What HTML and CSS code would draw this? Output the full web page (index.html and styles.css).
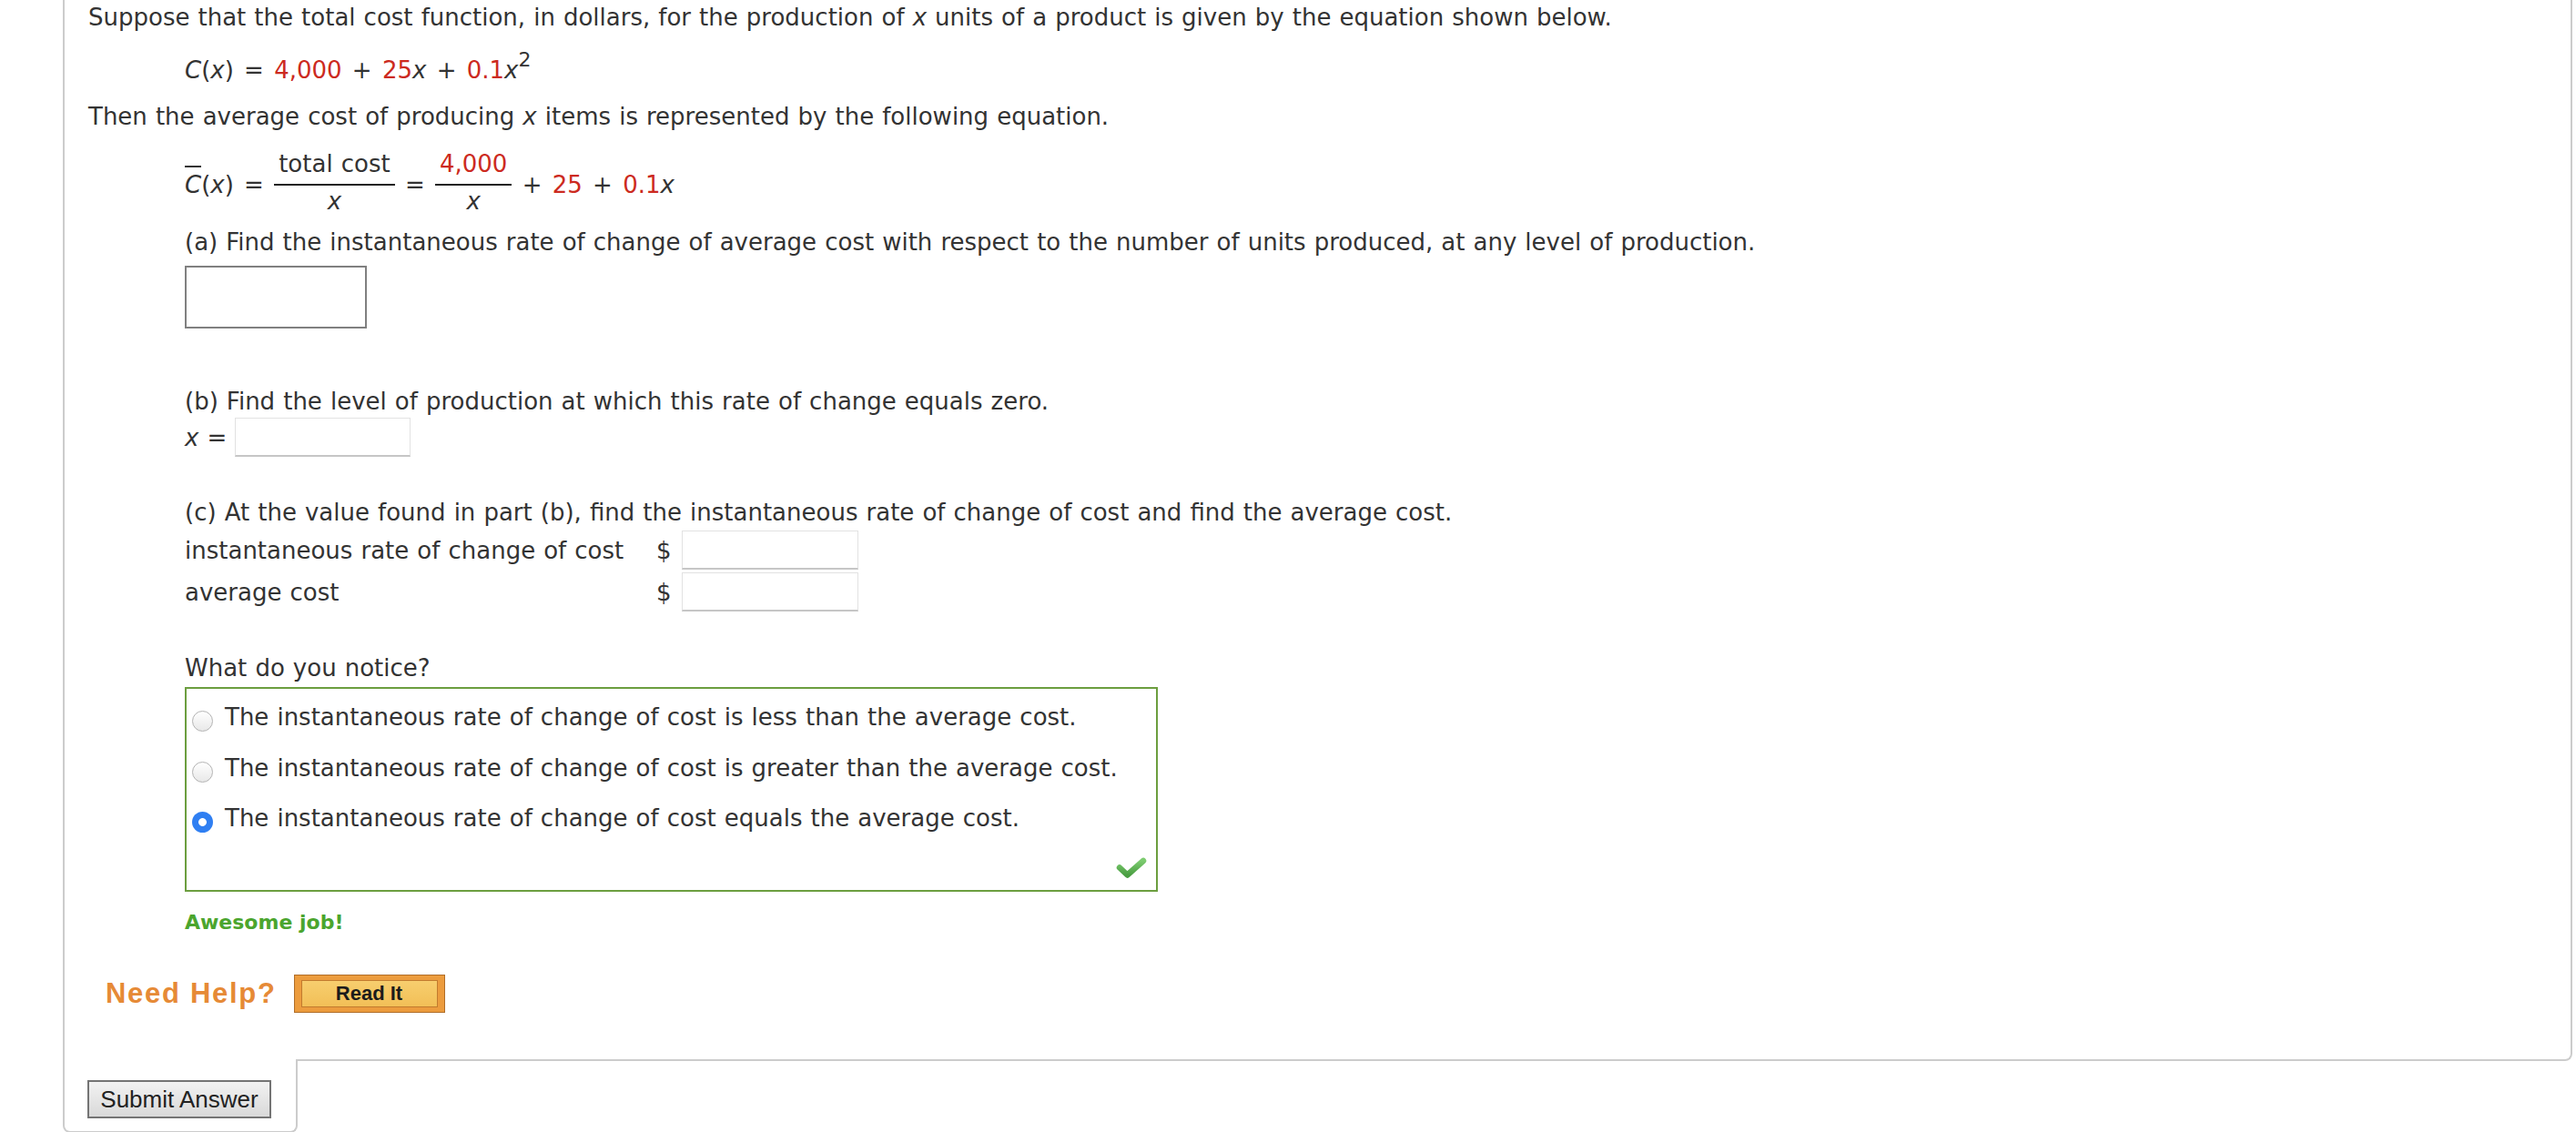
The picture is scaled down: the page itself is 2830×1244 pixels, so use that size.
FILE: index.html
```html
<!DOCTYPE html>
<html>
<head>
<meta charset="utf-8">
<link rel="stylesheet" href="styles.css">
</head>
<body>
<div class="card">
  <div class="qbody">
    <p class="txt first">Suppose that the total cost function, in dollars, for the production of <i>x</i> units of a product is given by the equation shown below.</p>
    <p class="math eq1"><i>C</i>(<i>x</i>) = <span class="red">4,000</span> + <span class="red">25</span><i>x</i> + <span class="red">0.1</span><i>x</i><sup>2</sup></p>
    <p class="txt p2">Then the average cost of producing <i>x</i> items is represented by the following equation.</p>
    <p class="math eq2"><span class="cbar"><i>C</i></span>(<i>x</i>) = <span class="frac"><span class="num">total cost</span><span class="bar"></span><span class="den"><i>x</i></span></span> = <span class="frac"><span class="num red">4,000</span><span class="bar"></span><span class="den"><i>x</i></span></span> + <span class="red">25</span> + <span class="red">0.1</span><i>x</i></p>
    <div class="part">
      <p class="txt pa">(a) Find the instantaneous rate of change of average cost with respect to the number of units produced, at any level of production.</p>
      <div class="mathbox"></div>
      <p class="txt pb">(b) Find the level of production at which this rate of change equals zero.</p>
      <div class="xrow"><span class="txt"><i>x</i> =</span><input class="ans ansx" type="text"></div>
      <p class="txt pc">(c) At the value found in part (b), find the instantaneous rate of change of cost and find the average cost.</p>
      <div class="grid">
        <span class="txt">instantaneous rate of change of cost</span><span class="txt dol">$</span><input class="ans" type="text">
        <span class="txt">average cost</span><span class="txt dol">$</span><input class="ans" type="text">
      </div>
      <p class="txt pn">What do you notice?</p>
      <div class="choices">
        <div class="opt"><span class="radio"></span><span class="txt">The instantaneous rate of change of cost is less than the average cost.</span></div>
        <div class="opt"><span class="radio"></span><span class="txt">The instantaneous rate of change of cost is greater than the average cost.</span></div>
        <div class="opt last"><span class="radio on"></span><span class="txt">The instantaneous rate of change of cost equals the average cost.</span></div>
        <div class="checkrow">
          <svg width="34" height="24" viewBox="0 0 34 24">
            <defs>
              <linearGradient id="cg" x1="0" y1="0" x2="0" y2="1">
                <stop offset="0" stop-color="#7ccb6f"/>
                <stop offset="1" stop-color="#4a9e42"/>
              </linearGradient>
            </defs>
            <path d="M4 11.5 L12.5 19.5 L30 4" fill="none" stroke="url(#cg)" stroke-width="6.5" stroke-linecap="round" stroke-linejoin="round"/>
          </svg>
        </div>
      </div>
      <p class="awesome">Awesome job!</p>
    </div>
    <div class="help">
      <span class="needhelp">Need Help?</span>
      <button class="readit" type="button"><span class="readin">Read It</span></button>
    </div>
  </div>
  <div class="tab"><button class="submit" type="button">Submit Answer</button></div>
</div>
</body>
</html>
```
FILE: styles.css
```css
html, body {
  margin: 0;
  padding: 0;
  background: #ffffff;
}
body {
  font-family: "DejaVu Sans", Verdana, sans-serif;
  font-size: 26px;
  color: #333333;
}
p { margin: 0; }
.card {
  margin-left: 69px;
  width: 2757px;
  box-sizing: border-box;
}
.qbody {
  border-left: 2px solid #cccccc;
  border-right: 2px solid #cccccc;
  border-bottom: 2px solid #cccccc;
  border-bottom-right-radius: 8px;
  padding: 3px 0 51px 26px;
}
.txt {
  line-height: 32px;
  word-spacing: 0.8px;
}
.math {
  line-height: 32px;
  word-spacing: 3px;
  margin-left: 106px;
}
.red { color: #cc2a20; }
sup {
  font-size: 22px;
  line-height: 0;
  vertical-align: 13px;
}
.eq1 { margin-top: 26px; }
.p2 { margin-top: 19px; }
.eq2 { margin-top: 20px; }
.cbar {
  display: inline-block;
  border-top: 2px solid #333333;
  padding-top: 6px;
  line-height: 26px;
}
.frac {
  display: inline-block;
  vertical-align: -18px;
  text-align: center;
  word-spacing: 0.8px;
}
.num {
  display: block;
  line-height: 32px;
  padding: 0 5px 6px 5px;
}
.bar {
  display: block;
  height: 2px;
  background: #222222;
}
.den {
  display: block;
  line-height: 32px;
  padding: 1px 5px 0 5px;
}
.part { margin-left: 106px; }
.pa { margin-top: 13px; }
.mathbox {
  margin-top: 10px;
  width: 200px;
  height: 69px;
  box-sizing: border-box;
  border: 2px solid #808080;
}
.pb { margin-top: 64px; }
.xrow {
  margin-top: 2px;
  height: 43px;
  display: flex;
  align-items: center;
}
.ans {
  box-sizing: border-box;
  height: 43px;
  width: 194px;
  margin: 0;
  padding: 0;
  border: 1px solid #e2e2e2;
  border-bottom: 2px solid #c6c6c6;
  background: #ffffff;
  font: inherit;
}
.ansx {
  margin-left: 9px;
  width: 193px;
}
.pc { margin-top: 45px; }
.grid {
  margin-top: 4px;
  display: grid;
  grid-template-columns: 518px 28px 194px;
  grid-auto-rows: 43px;
  row-gap: 3px;
  align-items: center;
}
.pn { margin-top: 46px; }
.choices {
  margin-top: 5px;
  width: 1069px;
  box-sizing: border-box;
  border: 2px solid #6c9e3f;
  padding: 15px 10px 12px 6px;
}
.opt {
  display: flex;
  align-items: flex-start;
  gap: 13px;
  margin-bottom: 23.5px;
}
.opt.last { margin-bottom: 27px; }
.radio {
  flex: none;
  width: 23px;
  height: 23px;
  margin-top: 9px;
  box-sizing: border-box;
  border-radius: 50%;
  border: 1px solid #b3b3b3;
  background: linear-gradient(#ffffff, #e8e8e8);
}
.radio.on {
  border: none;
  background: radial-gradient(circle, #ffffff 0 4px, #2f7ff2 4.8px);
}
.checkrow {
  display: flex;
  justify-content: flex-end;
  height: 24px;
}
.checkrow svg { display: block; }
.awesome {
  margin-top: 20px;
  font-size: 22px;
  font-weight: bold;
  line-height: 28px;
  color: #4ba52e;
}
.help {
  margin-top: 43px;
  margin-left: 19px;
  height: 42px;
  display: flex;
  align-items: center;
  gap: 19px;
}
.needhelp {
  font-family: "Liberation Sans", Arial, sans-serif;
  font-size: 31px;
  font-weight: bold;
  letter-spacing: 1.7px;
  color: #e68a36;
  line-height: 36px;
}
.readit {
  box-sizing: border-box;
  width: 166px;
  height: 42px;
  margin: 0;
  padding: 5px 7px;
  border: 1px solid #b06d28;
  background: #ec9c3e;
  cursor: pointer;
}
.readin {
  display: block;
  box-sizing: border-box;
  height: 30px;
  border: 1px solid #c27b2e;
  background: linear-gradient(#f7ce6e, #f2bf57);
  font-family: "Liberation Sans", Arial, sans-serif;
  font-weight: bold;
  font-size: 22px;
  line-height: 28px;
  color: #1b1b1b;
  text-align: center;
}
.tab {
  width: 258px;
  margin-top: -2px;
  box-sizing: border-box;
  background: #ffffff;
  border: 2px solid #cccccc;
  border-top: none;
  border-radius: 0 0 8px 8px;
  padding: 23px 0 14px 25px;
}
.submit {
  display: block;
  box-sizing: border-box;
  width: 202px;
  height: 42px;
  margin: 0;
  padding: 0;
  border: 2px solid #747474;
  background: linear-gradient(#f2f2f2, #d9d9d9);
  font-family: "Liberation Sans", Arial, sans-serif;
  font-size: 26px;
  color: #222222;
}
```
